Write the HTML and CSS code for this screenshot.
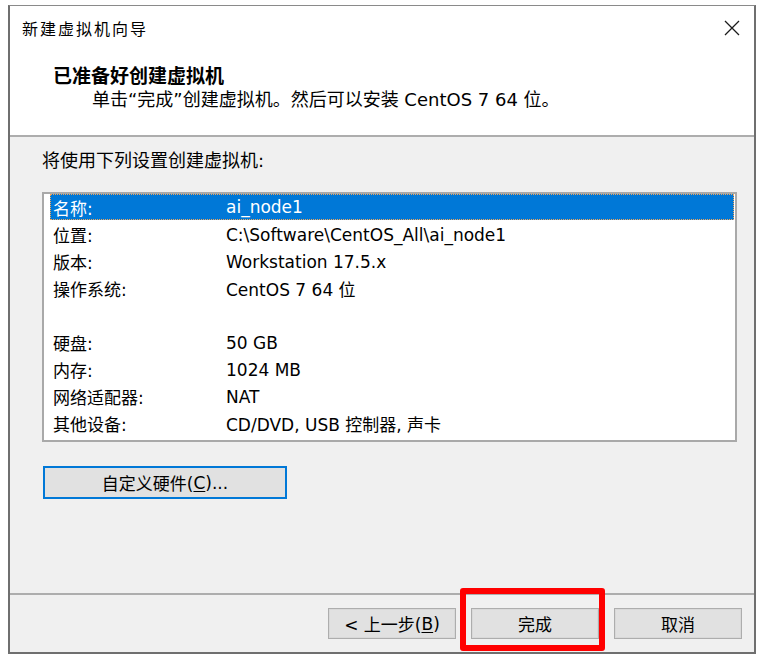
FILE: index.html
```html
<!DOCTYPE html>
<html lang="zh-CN">
<head>
<meta charset="utf-8">
<title>新建虚拟机向导</title>
<link rel="stylesheet" href="styles.css">
</head>
<body>
<div class="window">
  <header class="head">
    <div class="titlebar">
      <span class="title">新建虚拟机向导</span>
      <svg class="close" width="16" height="16" viewBox="0 0 16 16" aria-hidden="true">
        <path d="M1 1 L15 15 M15 1 L1 15" stroke="#1b1b1b" stroke-width="1.3" fill="none"/>
      </svg>
    </div>
    <div class="heading">已准备好创建虚拟机</div>
    <div class="sub">单击“完成”创建虚拟机。然后可以安装 CentOS 7 64 位。</div>
  </header>
  <main class="body">
    <p class="intro">将使用下列设置创建虚拟机:</p>
    <div class="listbox">
      <div class="row sel"><span class="k">名称:</span><span class="v">ai_node1</span></div>
      <div class="row"><span class="k">位置:</span><span class="v">C:\Software\CentOS_All\ai_node1</span></div>
      <div class="row"><span class="k">版本:</span><span class="v">Workstation 17.5.x</span></div>
      <div class="row"><span class="k">操作系统:</span><span class="v">CentOS 7 64 位</span></div>
      <div class="row"></div>
      <div class="row"><span class="k">硬盘:</span><span class="v">50 GB</span></div>
      <div class="row"><span class="k">内存:</span><span class="v">1024 MB</span></div>
      <div class="row"><span class="k">网络适配器:</span><span class="v">NAT</span></div>
      <div class="row"><span class="k">其他设备:</span><span class="v">CD/DVD, USB 控制器, 声卡</span></div>
    </div>
    <button class="btn custom">自定义硬件(<u>C</u>)...</button>
  </main>
  <footer class="foot">
    <button class="btn">&lt; 上一步(<u>B</u>)</button>
    <button class="btn">完成</button>
    <button class="btn">取消</button>
  </footer>
  <div class="mark"></div>
</div>
</body>
</html>
```
FILE: styles.css
```css
* { box-sizing: border-box; }

html, body {
  background: #ffffff;
}

body {
  margin: 5px 0 0 8px;
  font-family: "DejaVu Sans", "Noto Sans CJK SC", sans-serif;
  color: #000;
}

.window {
  position: relative;
  width: 748px;
  height: 649px;
  border: 2px solid #6f6f6f;
  border-top: 1px solid #8a8a8a;
  background: #f0f0f0;
  display: flex;
  flex-direction: column;
}

.head {
  height: 131px;
  flex: none;
  background: #ffffff;
  border-bottom: 2px solid #adadad;
}

.titlebar {
  height: 44px;
  display: flex;
  align-items: center;
  justify-content: space-between;
  padding: 0 14px 0 12px;
}

.title {
  font-family: "Noto Sans CJK SC", sans-serif;
  font-size: 16px;
  letter-spacing: 2px;
  color: #000;
}

.close {
  display: block;
  width: 16px;
  height: 16px;
}

.heading {
  margin-top: 13px;
  padding-left: 43px;
  font-family: "Noto Sans CJK SC", sans-serif;
  font-weight: 700;
  font-size: 19px;
  line-height: 24px;
}

.sub {
  margin-top: 3px;
  padding-left: 82px;
  font-size: 18px;
  line-height: 20px;
}

.body {
  flex: 1;
  padding: 12px 0 0 32px;
  display: flex;
  flex-direction: column;
  align-items: flex-start;
}

.intro {
  margin: 0;
  font-size: 18px;
  line-height: 24px;
}

.listbox {
  margin-top: 19px;
  width: 695px;
  height: 250px;
  background: #fff;
  border: 2px solid #a9a9a9;
  padding: 0 1px 0 6px;
}

.row {
  display: flex;
  height: 27px;
  align-items: center;
  font-size: 17px;
  padding-left: 3px;
  white-space: nowrap;
}

.row.sel {
  height: 26px;
  background: #0078d7;
  color: #fff;
  border: 1px dotted #f2a65a;
  padding-left: 2px;
  margin-bottom: 1px;
}

.k {
  width: 173px;
  flex: none;
}

.btn {
  font-family: "DejaVu Sans", "Noto Sans CJK SC", sans-serif;
  font-size: 17px;
  color: #000;
  background: #e1e1e1;
  border: 1px solid #adadad;
  box-shadow: inset 0 0 0 1px #d9d9d9;
  width: 128px;
  height: 31px;
  padding: 0;
  display: flex;
  align-items: center;
  justify-content: center;
}

.btn u {
  text-underline-offset: 2px;
}

.custom {
  margin: 24px 0 0 1px;
  width: 244px;
  height: 33px;
  border: 2px solid #0078d7;
  box-shadow: none;
}

.foot {
  height: 59px;
  flex: none;
  border-top: 2px solid #adadad;
  display: flex;
  justify-content: flex-end;
  align-items: flex-start;
  gap: 15px;
  padding: 13px 12px 0 0;
}

.mark {
  position: absolute;
  left: 450px;
  top: 582px;
  width: 145px;
  height: 63px;
  border: 6px solid #ff0000;
  border-radius: 3px;
  pointer-events: none;
}
```
